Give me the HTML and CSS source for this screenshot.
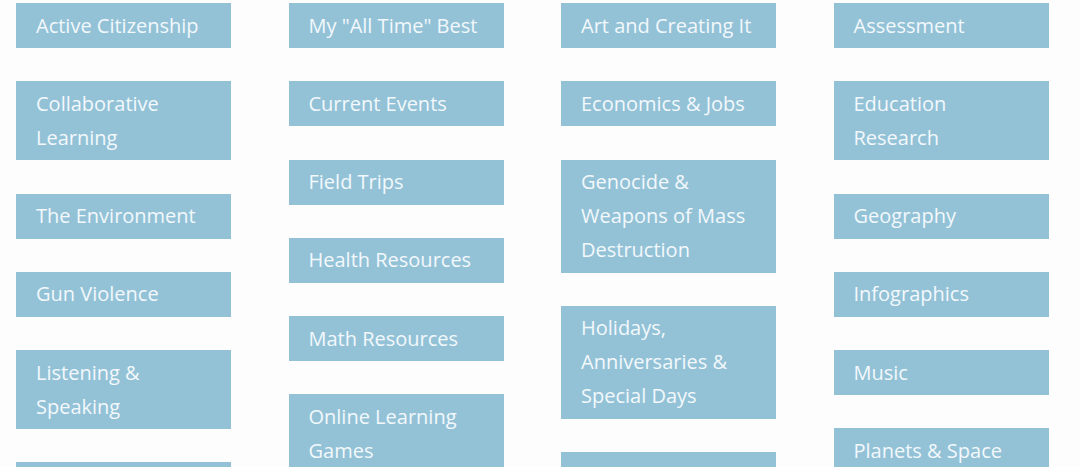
FILE: index.html
```html
<!DOCTYPE html>
<html lang="en">
<head>
<meta charset="utf-8">
<title>Topics</title>
<link rel="stylesheet" href="styles.css">
</head>
<body>
<div class="grid">
  <div class="col">
    <a class="tag">Active Citizenship</a>
    <a class="tag">Collaborative Learning</a>
    <a class="tag">The Environment</a>
    <a class="tag">Gun Violence</a>
    <a class="tag">Listening &amp; Speaking</a>
    <a class="tag">Media Literacy</a>
  </div>
  <div class="col">
    <a class="tag">My "All Time" Best</a>
    <a class="tag">Current Events</a>
    <a class="tag">Field Trips</a>
    <a class="tag">Health Resources</a>
    <a class="tag">Math Resources</a>
    <a class="tag">Online Learning Games</a>
  </div>
  <div class="col">
    <a class="tag">Art and Creating It</a>
    <a class="tag">Economics &amp; Jobs</a>
    <a class="tag">Genocide &amp; Weapons of Mass Destruction</a>
    <a class="tag">Holidays, Anniversaries &amp; Special Days</a>
    <a class="tag">Proof of the Millennial</a>
  </div>
  <div class="col">
    <a class="tag">Assessment</a>
    <a class="tag">Education Research</a>
    <a class="tag">Geography</a>
    <a class="tag">Infographics</a>
    <a class="tag">Music</a>
    <a class="tag">Planets &amp; Space</a>
  </div>
</div>
</body>
</html>
```
FILE: styles.css
```css
html, body {
  margin: 0;
  padding: 0;
  background: #fdfdfd;
  overflow: hidden;
}
body {
  font-family: "Open Sans", "Liberation Sans", sans-serif;
  height: 467px;
}
.grid {
  display: grid;
  grid-template-columns: repeat(4, 215px);
  column-gap: 57.5px;
  padding: 3px 0 0 16px;
}
.col {
  display: flex;
  flex-direction: column;
  gap: 33.3px;
}
.tag {
  display: block;
  background: #93c2d7;
  color: #f2f8fb;
  font-size: 20px;
  line-height: 34px;
  padding: 5.5px 20px;
  text-decoration: none;
}
```
